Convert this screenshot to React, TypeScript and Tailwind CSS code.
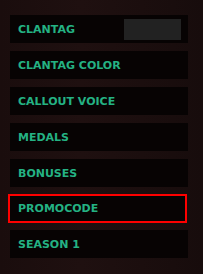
import React from "react";

const items = [
  "CLANTAG",
  "CLANTAG COLOR",
  "CALLOUT VOICE",
  "MEDALS",
  "BONUSES",
  "PROMOCODE",
  "SEASON 1",
];

export default function App() {
  return (
    <div className="h-[274px] w-[203px] overflow-hidden bg-[linear-gradient(90deg,#1a0d0d,#1f1010_40%,#1b0e0e_70%,#170c0c)] pt-[15px] pl-[10px] pr-[15px]">
      <div className="flex flex-col gap-2">
        {items.map((label) =>
          label === "PROMOCODE" ? (
            <div
              key={label}
              className="-mx-[2px] -my-[1px] mr-[1px] flex h-[29px] items-center border-2 border-[#ff0000] bg-[#070303] pl-[8px]"
            >
              <span
                className="text-[11px] font-bold leading-none text-[#24b283]"
                style={{ fontFamily: '"DejaVu Sans", sans-serif' }}
              >
                {label}
              </span>
            </div>
          ) : (
            <div
              key={label}
              className="flex h-[28px] items-center justify-between bg-[#070303] pl-[8px] pr-[7px]"
            >
              <span
                className="text-[11px] font-bold leading-none text-[#24b283]"
                style={{ fontFamily: '"DejaVu Sans", sans-serif' }}
              >
                {label}
              </span>
              {label === "CLANTAG" && (
                <div className="h-[21px] w-[57px] bg-[#222222]" />
              )}
            </div>
          )
        )}
      </div>
    </div>
  );
}
